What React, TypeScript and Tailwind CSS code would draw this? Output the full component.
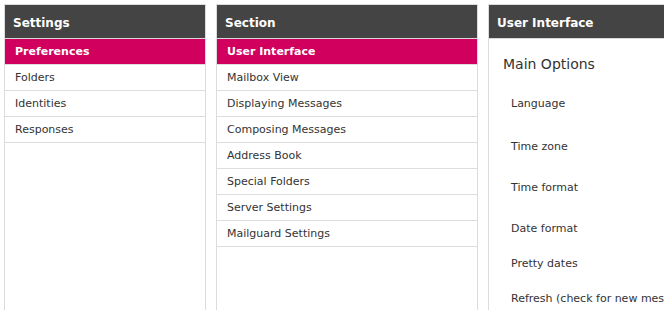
const settings = ['Preferences', 'Folders', 'Identities', 'Responses']
const sections = [
  'User Interface',
  'Mailbox View',
  'Displaying Messages',
  'Composing Messages',
  'Address Book',
  'Special Folders',
  'Server Settings',
  'Mailguard Settings',
]

// label rows with the height each one takes in the options form
const options: { label: string; h: string }[] = [
  { label: 'Language', h: 'h-[43px]' },
  { label: 'Time zone', h: 'h-[41px]' },
  { label: 'Time format', h: 'h-[41px]' },
  { label: 'Date format', h: 'h-[35px]' },
  { label: 'Pretty dates', h: 'h-[35px]' },
  { label: 'Refresh (check for new messages, etc.)', h: 'h-[35px]' },
]

function Panel({
  title,
  width,
  children,
}: {
  title: string
  width: string
  children: React.ReactNode
}) {
  return (
    <div className={`flex shrink-0 flex-col overflow-hidden border border-b-0 border-[#dcdcdc] bg-white ${width}`}>
      <div className="flex h-[34px] shrink-0 items-center border-b border-[#d8d8d8] bg-[#444444] px-2 pt-[2px] text-[12px] font-bold text-white">
        {title}
      </div>
      {children}
    </div>
  )
}

function List({ items }: { items: string[] }) {
  return (
    <ul>
      {items.map((it, i) => (
        <li
          key={it}
          className={`flex h-[26px] items-center border-b border-[#dddddd] px-[10px] pt-[2px] text-[11px] ${
            i === 0 ? 'bg-[#d1005e] text-[11.5px] font-bold text-white' : 'text-[#333333]'
          }`}
        >
          {it}
        </li>
      ))}
    </ul>
  )
}

export default function App() {
  return (
    <div
      className="flex h-[310px] gap-[10px] overflow-hidden bg-white pl-[4px] pt-[4px]"
      style={{ fontFamily: '"DejaVu Sans", Verdana, sans-serif' }}
    >
      <Panel title="Settings" width="w-[202px]">
        <List items={settings} />
      </Panel>
      <Panel title="Section" width="w-[262px]">
        <List items={sections} />
      </Panel>
      <Panel title="User Interface" width="w-[300px]">
        <div className="px-[14px] pt-[14px]">
          <div className="h-[43px] pt-px text-[14px] text-[#333333]">Main Options</div>
          <div className="pl-[8px]">
            {options.map((o) => (
              <div key={o.label} className={`flex items-start whitespace-nowrap text-[11px] text-[#333333] ${o.h}`}>
                {o.label}
              </div>
            ))}
          </div>
        </div>
      </Panel>
    </div>
  )
}
